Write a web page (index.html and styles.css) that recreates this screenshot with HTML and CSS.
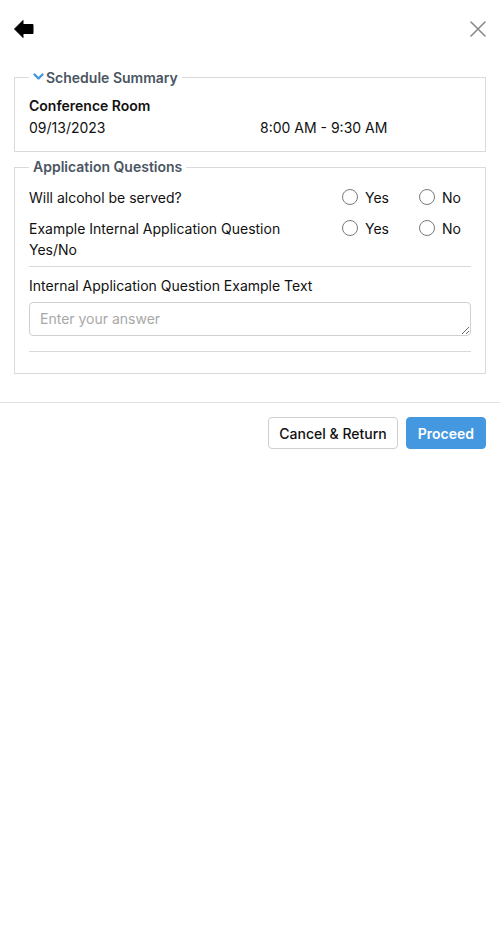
FILE: index.html
```html
<!DOCTYPE html>
<html lang="en">
<head>
  <meta charset="UTF-8" />
  <meta name="viewport" content="width=device-width, initial-scale=1.0" />
  <title>Schedule Summary</title>
  <link rel="stylesheet" href="styles.css">
</head>
<body>
  <div class="header">
    <a class="back">
      <svg width="20" height="18" viewBox="0 0 20 18"><path d="M0.5 9 L9 0.5 L9 4.5 L19 4.5 L19 13.5 L9 13.5 L9 17.5 Z" fill="#000" stroke="#000" stroke-width="1" stroke-linejoin="round"/></svg>
    </a>
    <a class="close">
      <svg width="16" height="16" viewBox="0 0 16 16"><path d="M1 1 L15 15 M15 1 L1 15" stroke="#8a8a8a" stroke-width="1.6" stroke-linecap="round"/></svg>
    </a>
  </div>

  <fieldset class="box summary">
    <legend><span class="chev"><svg width="11" height="8" viewBox="0 0 11 8"><path d="M1.5 1.5 L5.5 5.5 L9.5 1.5" fill="none" stroke="#4299e1" stroke-width="2.4" stroke-linecap="round" stroke-linejoin="round"/></svg></span>Schedule Summary</legend>
    <div class="room">Conference Room</div>
    <div class="when">
      <span class="date">09/13/2023</span>
      <span class="time">8:00 AM - 9:30 AM</span>
    </div>
  </fieldset>

  <fieldset class="box questions">
    <legend>Application Questions</legend>
    <div class="question">
      <div class="q-text">Will alcohol be served?</div>
      <label class="opt"><span class="radio"></span>Yes</label>
      <label class="opt"><span class="radio"></span>No</label>
    </div>
    <div class="question">
      <div class="q-text">Example Internal Application Question Yes/No</div>
      <label class="opt"><span class="radio"></span>Yes</label>
      <label class="opt"><span class="radio"></span>No</label>
    </div>
    <hr class="divider">
    <div class="text-q">
      <label>Internal Application Question Example Text</label>
      <textarea placeholder="Enter your answer"></textarea>
    </div>
    <hr class="divider last">
  </fieldset>

  <div class="footer">
    <button class="btn">Cancel &amp; Return</button>
    <button class="btn primary">Proceed</button>
  </div>
</body>
</html>
```

FILE: styles.css
```css
body {
  font-family: Inter, 'Noto Sans', sans-serif;
  font-size: 14px;
  margin: 0;
  background: #fff;
  color: #111;
}
.header {
  height: 56px;
  padding: 0 14px;
  display: flex;
  justify-content: space-between;
  align-items: center;
}
.header a {
  display: flex;
  cursor: pointer;
}
.back {
  margin-top: 1px;
}
.close {
  margin-top: 2px;
}
.box {
  margin: 0 14px;
  padding: 8px 14px 12px;
  border: 1px solid #dadada;
  min-width: 0;
}
.box legend {
  padding: 0 4px;
  font-weight: 600;
  color: #4a5562;
  line-height: 18px;
}
.summary {
  margin-top: 11px;
}
.chev {
  display: inline-block;
  margin-right: 2px;
  vertical-align: 2px;
}
.room {
  font-weight: 600;
  line-height: 22px;
}
.when {
  display: flex;
  line-height: 22px;
}
.date {
  width: 231px;
}
.questions {
  margin-top: 6px;
  padding: 11px 14px 21px;
}
.question {
  display: grid;
  grid-template-columns: 1fr 77px 52px;
  line-height: 21px;
  margin-bottom: 10px;
}
.question:nth-of-type(2) {
  margin-bottom: 6px;
}
.q-text {
  padding-right: 30px;
}
.opt {
  display: flex;
  align-items: flex-start;
  cursor: pointer;
}
.radio {
  width: 16px;
  height: 16px;
  border: 1.5px solid #7a7a7a;
  border-radius: 50%;
  margin: 2px 7px 0 0;
  box-sizing: border-box;
}
.divider {
  border: none;
  border-top: 1px solid #d9d9d9;
  margin: 0;
}
.text-q {
  padding-top: 8px;
}
.text-q label {
  display: block;
  line-height: 21px;
  margin-bottom: 6px;
}
textarea {
  display: block;
  width: 100%;
  box-sizing: border-box;
  height: 34px;
  border: 1px solid #cfcfcf;
  border-radius: 4px;
  padding: 7px 10px;
  font-family: Inter, 'Noto Sans', sans-serif;
  font-size: 14px;
  line-height: 18px;
  color: #111;
}
textarea::placeholder {
  color: #a8a8a8;
}
.divider.last {
  margin-top: 15px;
}
.footer {
  margin-top: 28px;
  border-top: 1px solid #e2e2e2;
  padding: 14px 14px;
  display: flex;
  justify-content: flex-end;
  gap: 8px;
}
.btn {
  height: 32px;
  padding: 0 10px;
  font-family: Inter, 'Noto Sans', sans-serif;
  font-size: 14px;
  font-weight: 500;
  background: #fff;
  color: #111;
  border: 1px solid #cfcfcf;
  border-radius: 4px;
  cursor: pointer;
}
.btn.primary {
  background: #4398e0;
  border-color: #4398e0;
  color: #fff;
  font-weight: 600;
  padding: 0 11px;
}
```
